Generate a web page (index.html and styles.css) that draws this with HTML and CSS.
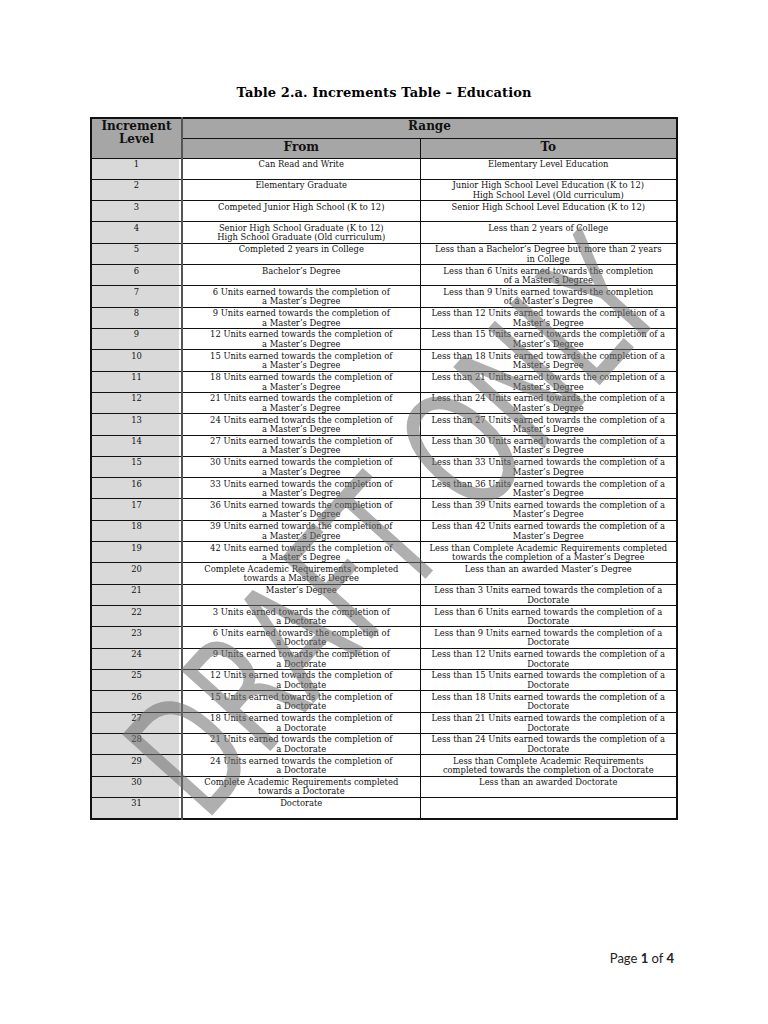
FILE: index.html
```html
<!DOCTYPE html>
<html lang="en">
<head>
<meta charset="utf-8">
<title>Table 2.a. Increments Table – Education</title>
<link rel="stylesheet" href="styles.css">
</head>
<body>
<div class="page">
  <h1 class="title">Table 2.a. Increments Table – Education</h1>
  <table class="inc">
    <colgroup><col class="c1"><col class="c2"><col class="c3"></colgroup>
    <thead>
      <tr class="h1"><th rowspan="2" class="lvl">Increment<br>Level</th><th colspan="2">Range</th></tr>
      <tr class="h2"><th>From</th><th>To</th></tr>
    </thead>
    <tbody>
      <tr><td class="n">1</td><td>Can Read and Write</td><td>Elementary Level Education</td></tr>
      <tr><td class="n">2</td><td>Elementary Graduate</td><td>Junior High School Level Education (K to 12)<br>High School Level (Old curriculum)</td></tr>
      <tr><td class="n">3</td><td>Competed Junior High School (K to 12)</td><td>Senior High School Level Education (K to 12)</td></tr>
      <tr><td class="n">4</td><td>Senior High School Graduate (K to 12)<br>High School Graduate (Old curriculum)</td><td>Less than 2 years of College</td></tr>
      <tr><td class="n">5</td><td>Completed 2 years in College</td><td>Less than a Bachelor’s Degree but more than 2 years<br>in College</td></tr>
      <tr><td class="n">6</td><td>Bachelor’s Degree</td><td>Less than 6 Units earned towards the completion<br>of a Master’s Degree</td></tr>
      <tr><td class="n">7</td><td>6 Units earned towards the completion of<br>a Master’s Degree</td><td>Less than 9 Units earned towards the completion<br>of a Master’s Degree</td></tr>
      <tr><td class="n">8</td><td>9 Units earned towards the completion of<br>a Master’s Degree</td><td>Less than 12 Units earned towards the completion of a<br>Master’s Degree</td></tr>
      <tr><td class="n">9</td><td>12 Units earned towards the completion of<br>a Master’s Degree</td><td>Less than 15 Units earned towards the completion of a<br>Master’s Degree</td></tr>
      <tr><td class="n">10</td><td>15 Units earned towards the completion of<br>a Master’s Degree</td><td>Less than 18 Units earned towards the completion of a<br>Master’s Degree</td></tr>
      <tr><td class="n">11</td><td>18 Units earned towards the completion of<br>a Master’s Degree</td><td>Less than 21 Units earned towards the completion of a<br>Master’s Degree</td></tr>
      <tr><td class="n">12</td><td>21 Units earned towards the completion of<br>a Master’s Degree</td><td>Less than 24 Units earned towards the completion of a<br>Master’s Degree</td></tr>
      <tr><td class="n">13</td><td>24 Units earned towards the completion of<br>a Master’s Degree</td><td>Less than 27 Units earned towards the completion of a<br>Master’s Degree</td></tr>
      <tr><td class="n">14</td><td>27 Units earned towards the completion of<br>a Master’s Degree</td><td>Less than 30 Units earned towards the completion of a<br>Master’s Degree</td></tr>
      <tr><td class="n">15</td><td>30 Units earned towards the completion of<br>a Master’s Degree</td><td>Less than 33 Units earned towards the completion of a<br>Master’s Degree</td></tr>
      <tr><td class="n">16</td><td>33 Units earned towards the completion of<br>a Master’s Degree</td><td>Less than 36 Units earned towards the completion of a<br>Master’s Degree</td></tr>
      <tr><td class="n">17</td><td>36 Units earned towards the completion of<br>a Master’s Degree</td><td>Less than 39 Units earned towards the completion of a<br>Master’s Degree</td></tr>
      <tr><td class="n">18</td><td>39 Units earned towards the completion of<br>a Master’s Degree</td><td>Less than 42 Units earned towards the completion of a<br>Master’s Degree</td></tr>
      <tr><td class="n">19</td><td>42 Units earned towards the completion of<br>a Master’s Degree</td><td>Less than Complete Academic Requirements completed<br>towards the completion of a Master’s Degree</td></tr>
      <tr><td class="n">20</td><td>Complete Academic Requirements completed<br>towards a Master’s Degree</td><td>Less than an awarded Master’s Degree</td></tr>
      <tr><td class="n">21</td><td>Master’s Degree</td><td>Less than 3 Units earned towards the completion of a<br>Doctorate</td></tr>
      <tr><td class="n">22</td><td>3 Units earned towards the completion of<br>a Doctorate</td><td>Less than 6 Units earned towards the completion of a<br>Doctorate</td></tr>
      <tr><td class="n">23</td><td>6 Units earned towards the completion of<br>a Doctorate</td><td>Less than 9 Units earned towards the completion of a<br>Doctorate</td></tr>
      <tr><td class="n">24</td><td>9 Units earned towards the completion of<br>a Doctorate</td><td>Less than 12 Units earned towards the completion of a<br>Doctorate</td></tr>
      <tr><td class="n">25</td><td>12 Units earned towards the completion of<br>a Doctorate</td><td>Less than 15 Units earned towards the completion of a<br>Doctorate</td></tr>
      <tr><td class="n">26</td><td>15 Units earned towards the completion of<br>a Doctorate</td><td>Less than 18 Units earned towards the completion of a<br>Doctorate</td></tr>
      <tr><td class="n">27</td><td>18 Units earned towards the completion of<br>a Doctorate</td><td>Less than 21 Units earned towards the completion of a<br>Doctorate</td></tr>
      <tr><td class="n">28</td><td>21 Units earned towards the completion of<br>a Doctorate</td><td>Less than 24 Units earned towards the completion of a<br>Doctorate</td></tr>
      <tr><td class="n">29</td><td>24 Units earned towards the completion of<br>a Doctorate</td><td>Less than Complete Academic Requirements<br>completed towards the completion of a Doctorate</td></tr>
      <tr><td class="n">30</td><td>Complete Academic Requirements completed<br>towards a Doctorate</td><td>Less than an awarded Doctorate</td></tr>
      <tr><td class="n">31</td><td>Doctorate</td><td></td></tr>
    </tbody>
  </table>
  <div class="watermark">DRAFT ONLY</div>
  <footer class="pager">Page <b>1</b> of <b>4</b></footer>
</div>
</body>
</html>
```

FILE: styles.css
```css
* { box-sizing: border-box; }
html, body { margin: 0; padding: 0; background: #fff; }
.page {
  position: relative;
  width: 768px;
  height: 1024px;
  overflow: hidden;
  display: flex;
  flex-direction: column;
  align-items: center;
  padding-top: 84px;
  color: #000;
  font-family: "DejaVu Serif", "Liberation Serif", serif;
}
.title {
  margin: 0;
  font-size: 13px;
  line-height: 18px;
  font-weight: bold;
  letter-spacing: 0.1px;
}
.inc {
  margin-top: 15px;
  width: 586px;
  border-collapse: collapse;
  table-layout: fixed;
  border: 2px solid #111;
}
.c1 { width: 91px; }
.c2 { width: 238px; }
.c3 { width: 257px; }
.inc th {
  background: #a6a6a6;
  font-weight: bold;
  font-size: 12px;
  line-height: 13px;
  vertical-align: top;
  text-align: center;
  border: 1px solid #111;
  padding: 1px 0 0;
  color: #111;
}
.inc .h1 th { height: 20px; }
.inc .h2 th { height: 20px; padding-top: 2px; }
.inc th.lvl { padding-top: 1px; border-right: 2px solid #555; }
.inc td {
  height: 21.3px;
  font-size: 8.4px;
  line-height: 9.4px;
  vertical-align: top;
  text-align: center;
  border: 1px solid #111;
  padding: 1.5px 0 0;
  white-space: nowrap;
  color: #111;
}
.inc td.n {
  background: #d9d9d9;
  box-shadow: inset -2px 0 #fff;
  border-right: 2px solid #555;
}
.watermark {
  position: absolute;
  left: -110px;
  top: 450px;
  width: 1000px;
  text-align: center;
  font-family: "DejaVu Sans", sans-serif;
  font-size: 166px;
  line-height: 166px;
  color: rgba(110, 110, 110, 0.55);
  transform: rotate(-48deg) scaleX(0.68);
  white-space: nowrap;
  pointer-events: none;
}
.pager {
  margin-top: auto;
  margin-bottom: 58px;
  align-self: flex-end;
  margin-right: 94px;
  font-family: "Lato", "Liberation Sans", sans-serif;
  font-size: 13px;
  line-height: 16px;
  color: #222;
}
.pager b { font-weight: bold; }
```
